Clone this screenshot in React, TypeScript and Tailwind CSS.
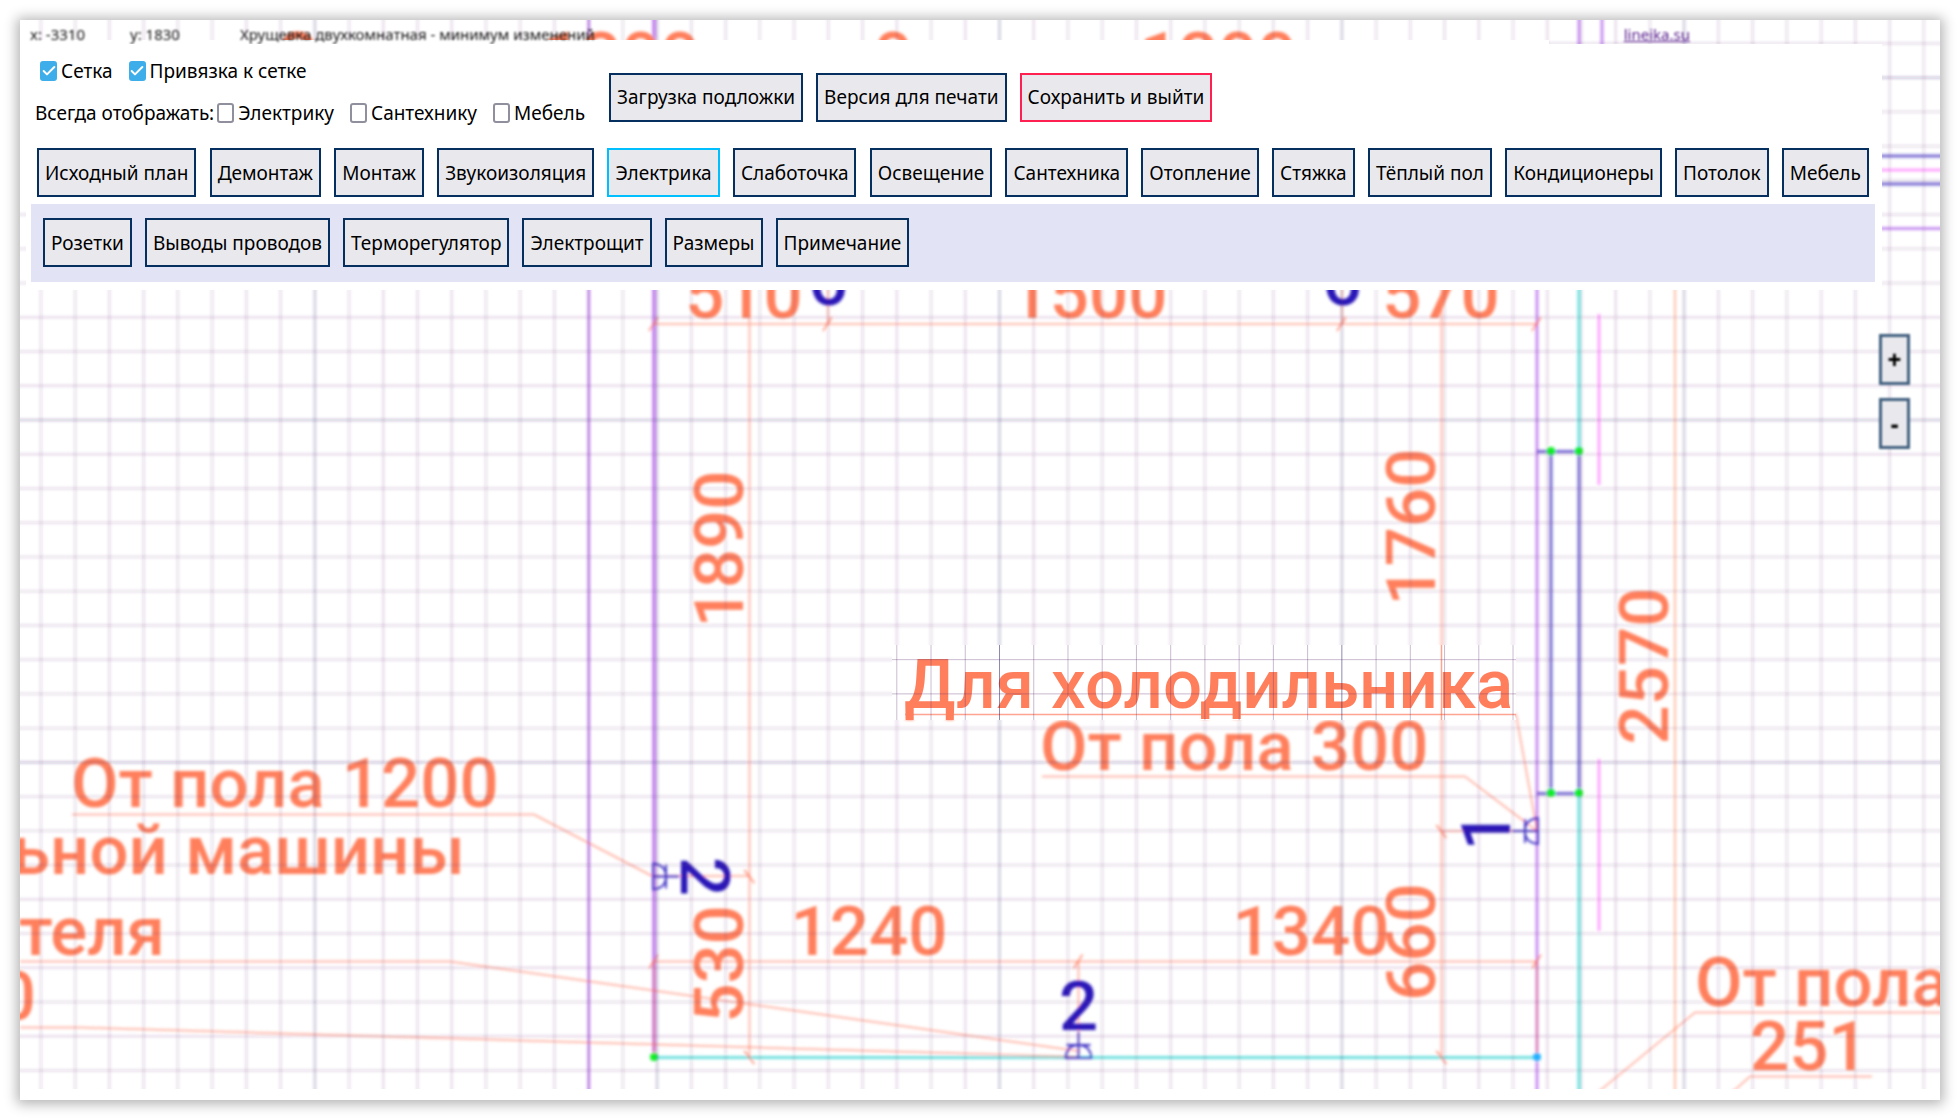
import React from 'react';
import { Check } from 'lucide-react';

const STAGES = [
  'Исходный план', 'Демонтаж', 'Монтаж', 'Звукоизоляция', 'Электрика', 'Слаботочка', 'Освещение',
  'Сантехника', 'Отопление', 'Стяжка', 'Тёплый пол', 'Кондиционеры', 'Потолок', 'Мебель',
];
const TOOLS = ['Розетки', 'Выводы проводов', 'Терморегулятор', 'Электрощит', 'Размеры', 'Примечание'];

type Tone = 'navy' | 'sky' | 'rose';

const TONES: Record<Tone, string> = {
  navy: 'border-[#052f5f]',
  sky: 'border-[#00bfff]',
  rose: 'border-[#ff2052]',
};

const ToolButton: React.FC<{ label: string; tone?: Tone }> = ({ label, tone = 'navy' }) => (
  <button
    type="button"
    className={`h-[49px] px-[6px] border-2 bg-[#e9e9ed] text-black whitespace-nowrap text-[19px] leading-7 ${TONES[tone]}`}
  >
    {label}
  </button>
);

const CheckOption: React.FC<{ id: string; label: string; checked?: boolean }> = ({ id, label, checked }) => (
  <label htmlFor={id} className="flex items-center gap-1">
    <span className="grid place-items-center">
      <input
        id={id}
        type="checkbox"
        defaultChecked={checked}
        className="peer col-start-1 row-start-1 appearance-none w-[17px] h-5 rounded-[3px] border-2 border-[#8f8f9d] bg-white checked:border-[#3daee9] checked:bg-[#3daee9]"
      />
      <Check className="col-start-1 row-start-1 size-4 text-white stroke-3 pointer-events-none invisible peer-checked:visible" />
    </span>
    {label}
  </label>
);

// Grid step on screen, a heavier line every tenth
const STEP = 34.235;
const GRID_X = 314.8;
const GRID_Y = 420;
const range = (from: number, to: number) => Array.from({ length: to - from + 1 }, (_, i) => from + i);

const Grid = () => (
  <g>
    {range(-9, 90).map(i => (
      <path
        key={`v${i}`}
        d={`M${GRID_X + i * STEP} 0V2200`}
        stroke={i % 10 === 0 ? '#32286e' : '#5b2a6e'}
        strokeOpacity={i % 10 === 0 ? 0.55 : 0.32}
      />
    ))}
    {range(-12, 50).map(i => (
      <path
        key={`h${i}`}
        d={`M0 ${GRID_Y + i * STEP}H3400`}
        stroke={i % 10 === 0 ? '#32286e' : '#5b2a6e'}
        strokeOpacity={i % 10 === 0 ? 0.55 : 0.32}
      />
    ))}
  </g>
);

// Centred figure: x, y of the baseline, rotation
const NUMBERS: [string, number, number, number][] = [
  ['2', 298, 81, 0],
  ['1200', 621, 81, 0],
  ['0', 893, 81, 0],
  ['1200', 1218, 81, 0],
  ['510', 744, 318, 0],
  ['1500', 1089, 318, 0],
  ['570', 1441, 318, 0],
  ['1240', 869, 955, 0],
  ['1340', 1311, 955, 0],
  ['1890', 743, 549, -90],
  ['530', 743, 964, -90],
  ['1760', 1435, 527, -90],
  ['660', 1435, 942, -90],
  ['2570', 1668, 666, -90],
];

const NOTES: [string, number, number, 'start' | 'end'][] = [
  ['Для холодильника', 904, 708, 'start'],
  ['От пола 300', 1040, 770, 'start'],
  ['От пола 1200', 71, 807, 'start'],
  ['ьной машины', 465, 874, 'end'],
  ['теля', 165, 955, 'end'],
  ['0', 36, 1020, 'end'],
  ['От пола', 1695, 1006, 'start'],
  ['251', 1750, 1070, 'start'],
];

const LEADERS = [
  'M905 714.5H1516L1537 830',
  'M1042 776.5H1465L1537 831',
  'M72 814.5H534L654 877',
  'M20 961.5H450L1078 1051',
  'M20 1027.5H80L1078 1057',
  'M3400 1012.5H1695L1602 1089L1540 1140',
  'M1872 1076.5H1750L1736 1089L1700 1120',
];

const TICKS: [number, number, number][] = [
  [654, 324, 0], [828, 324, 0], [1342, 324, 0], [1537, 324, 0],
  [654, 961.5, 0], [1078.5, 961.5, 0], [1537, 961.5, 0],
  [749.5, 876, 70], [749.5, 1057, 70], [1441.5, 831, 70], [1441.5, 1057, 70],
];

const SOCKETS: [string, number, number, number][] = [
  ['2', 1078.5, 1057, 0],
  ['2', 654, 876.5, 90],
  ['1', 1537, 831, -90],
];

const NODES = [[1551, 451], [1579, 451], [1551, 793], [1579, 793], [654, 1057]];

const Plan = () => (
  <g id="plan" fill="none">
    <g stroke="#8f1fe0" strokeOpacity="0.58" strokeWidth="2.5">
      <path d="M588.8 0V2200M1537 200V2200M1579 0V200M1602 0V200M1880 228.5H3400" />
      <path d="M654 0V1057" strokeWidth="3.5" />
    </g>
    <path d="M1579 200V451M1579 793V2200" stroke="#2fd0d0" strokeOpacity="0.7" strokeWidth="3" />
    <path d="M654 1057.5H1537" stroke="#2fd0d0" strokeOpacity="0.7" strokeWidth="3" />
    <path d="M1579 451V793M1551 451V793M1537 451.5H1579M1537 793.5H1579M1880 156H3400M1880 184H3400" stroke="#2a1fb8" strokeOpacity="0.65" strokeWidth="3" />
    <path d="M1599 314V485M1599 759V931M1880 170H3400" stroke="#ff50ff" strokeOpacity="0.6" strokeWidth="2.5" />
    <path d="M1675 200V2200" stroke="#ff7038" strokeOpacity="0.45" strokeWidth="2" />

    <g stroke="#ff5a36" strokeWidth="1.5" strokeOpacity="0.55">
      <path d="M654 324H1537M828 200V324M1342 200V324M749.5 200V1057M654 876H749.5M654 961.5H1537M1078.5 961.5V1057M654 961.5V1057M1537 961.5V1057M1441.5 200V1057M1441.5 831H1537" />
      {LEADERS.map(d => <path key={d} d={d} />)}
      {TICKS.map(([x, y, r]) => (
        <path key={`${x}-${y}`} d="M-5 7L4 -7" strokeWidth="2" transform={`translate(${x} ${y}) rotate(${-r})`} />
      ))}
    </g>

    <g fill="#ff7f5c" className="font-['Roboto',sans-serif] text-[69px] font-medium">
      {NUMBERS.map(([text, x, y, r]) => (
        <text key={`${x}-${y}`} textAnchor="middle" transform={`translate(${x} ${y}) rotate(${r})`}>{text}</text>
      ))}
      {NOTES.map(([text, x, y, anchor]) => (
        <text key={`${x}-${y}`} x={x} y={y} textAnchor={anchor}>{text}</text>
      ))}
    </g>

    <g className="font-['Roboto',sans-serif] text-[69px] font-medium">
      {SOCKETS.map(([text, x, y, r]) => (
        <g key={`${x}-${y}`} transform={`translate(${x} ${y}) rotate(${r})`}>
          <path d="M0 1V-25M-12 -12H12M-13 1C-12 -8 -8 -12 0 -12S12 -8 13 1Z" stroke="#3a2fc4" strokeWidth="1.8" />
          <text y="-27" textAnchor="middle" fill="#2a18b8">{text}</text>
        </g>
      ))}
      <text x="828" y="305" textAnchor="middle" fill="#2a18b8">6</text>
      <text x="1342" y="305" textAnchor="middle" fill="#2a18b8">6</text>
    </g>

    {NODES.map(([x, y]) => (
      <circle key={`${x}-${y}`} cx={x} cy={y} r="4" fill="#10f020" />
    ))}
    <circle cx="1537" cy="1057" r="4" fill="#20b0ff" />
    <Grid />
  </g>
);

const Canvas = () => (
  <svg className="absolute inset-x-0 top-0 w-full h-[calc(100%-11px)]">
    <defs>
      <filter id="soft" filterUnits="userSpaceOnUse" x="0" y="0" width="3400" height="2200">
        <feGaussianBlur stdDeviation="1.6" />
      </filter>
      <clipPath id="focus"><rect x="892" y="645" width="624" height="75" /></clipPath>
      <Plan />
    </defs>
    <g transform="translate(-20 -20)">
      <use href="#plan" filter="url(#soft)" />
      <rect x="892" y="645" width="624" height="75" fill="#fff" />
      <use href="#plan" clipPath="url(#focus)" />
      <path d="M20 40H1549V60H26V204H20Z" fill="#fff" />
    </g>
  </svg>
);

export default function App() {
  return (
    <div className="flex min-h-screen bg-white p-5 font-['Noto_Sans',sans-serif] text-black">
      <main className="relative flex grow flex-col overflow-hidden bg-white shadow-[0_1px_12px_3px_rgba(0,0,0,0.3)]">
        <Canvas />

        <div className="relative flex h-6 items-end pl-[10px] pr-[250px] text-[15px] leading-5 text-[#111] blur-[1px]">
          <span className="w-[100px]">x: -3310</span>
          <span className="w-[110px]">y: 1830</span>
          <span>Хрущевка двухкомнатная - минимум изменений</span>
          <a href="#" className="ml-auto text-[#551a8b] underline">lineika.su</a>
        </div>

        <header className="relative ml-[6px] mr-[58px] bg-white pt-[6px] pb-2 pl-[5px] pr-[7px]">
          <div className="flex items-center gap-6 pl-1">
            <div className="text-[19px] leading-6">
              <div className="flex h-[42px] items-center gap-4 pl-[5px]">
                <CheckOption id="grid" label="Сетка" checked />
                <CheckOption id="snap" label="Привязка к сетке" checked />
              </div>
              <div className="flex h-[42px] items-center gap-4">
                <div className="flex items-center gap-[3px]">
                  <span>Всегда отображать:</span>
                  <CheckOption id="electric" label="Электрику" />
                </div>
                <CheckOption id="plumbing" label="Сантехнику" />
                <CheckOption id="furniture" label="Мебель" />
              </div>
            </div>
            <div className="flex gap-[13px] pt-[10px]">
              <ToolButton label="Загрузка подложки" />
              <ToolButton label="Версия для печати" />
              <ToolButton label="Сохранить и выйти" tone="rose" />
            </div>
          </div>

          <nav className="mt-[14px] flex flex-wrap justify-between px-[6px]">
            {STAGES.map(name => (
              <ToolButton key={name} label={name} tone={name === 'Электрика' ? 'sky' : 'navy'} />
            ))}
          </nav>

          <div className="mt-[7px] flex flex-wrap gap-[13px] bg-[#e2e3f5] px-3 pt-[14px] pb-[15px]">
            {TOOLS.map(name => <ToolButton key={name} label={name} />)}
          </div>
        </header>

        <div className="relative mr-[30px] mt-11 flex flex-col gap-[13px] self-end blur-[1px]">
          {['+', '-'].map(sign => (
            <button key={sign} type="button" className="h-[51px] w-[31px] border-[3px] border-[#42607f] bg-[#e9e9ed] text-[24px] font-extrabold">
              {sign}
            </button>
          ))}
        </div>
      </main>
    </div>
  );
}
